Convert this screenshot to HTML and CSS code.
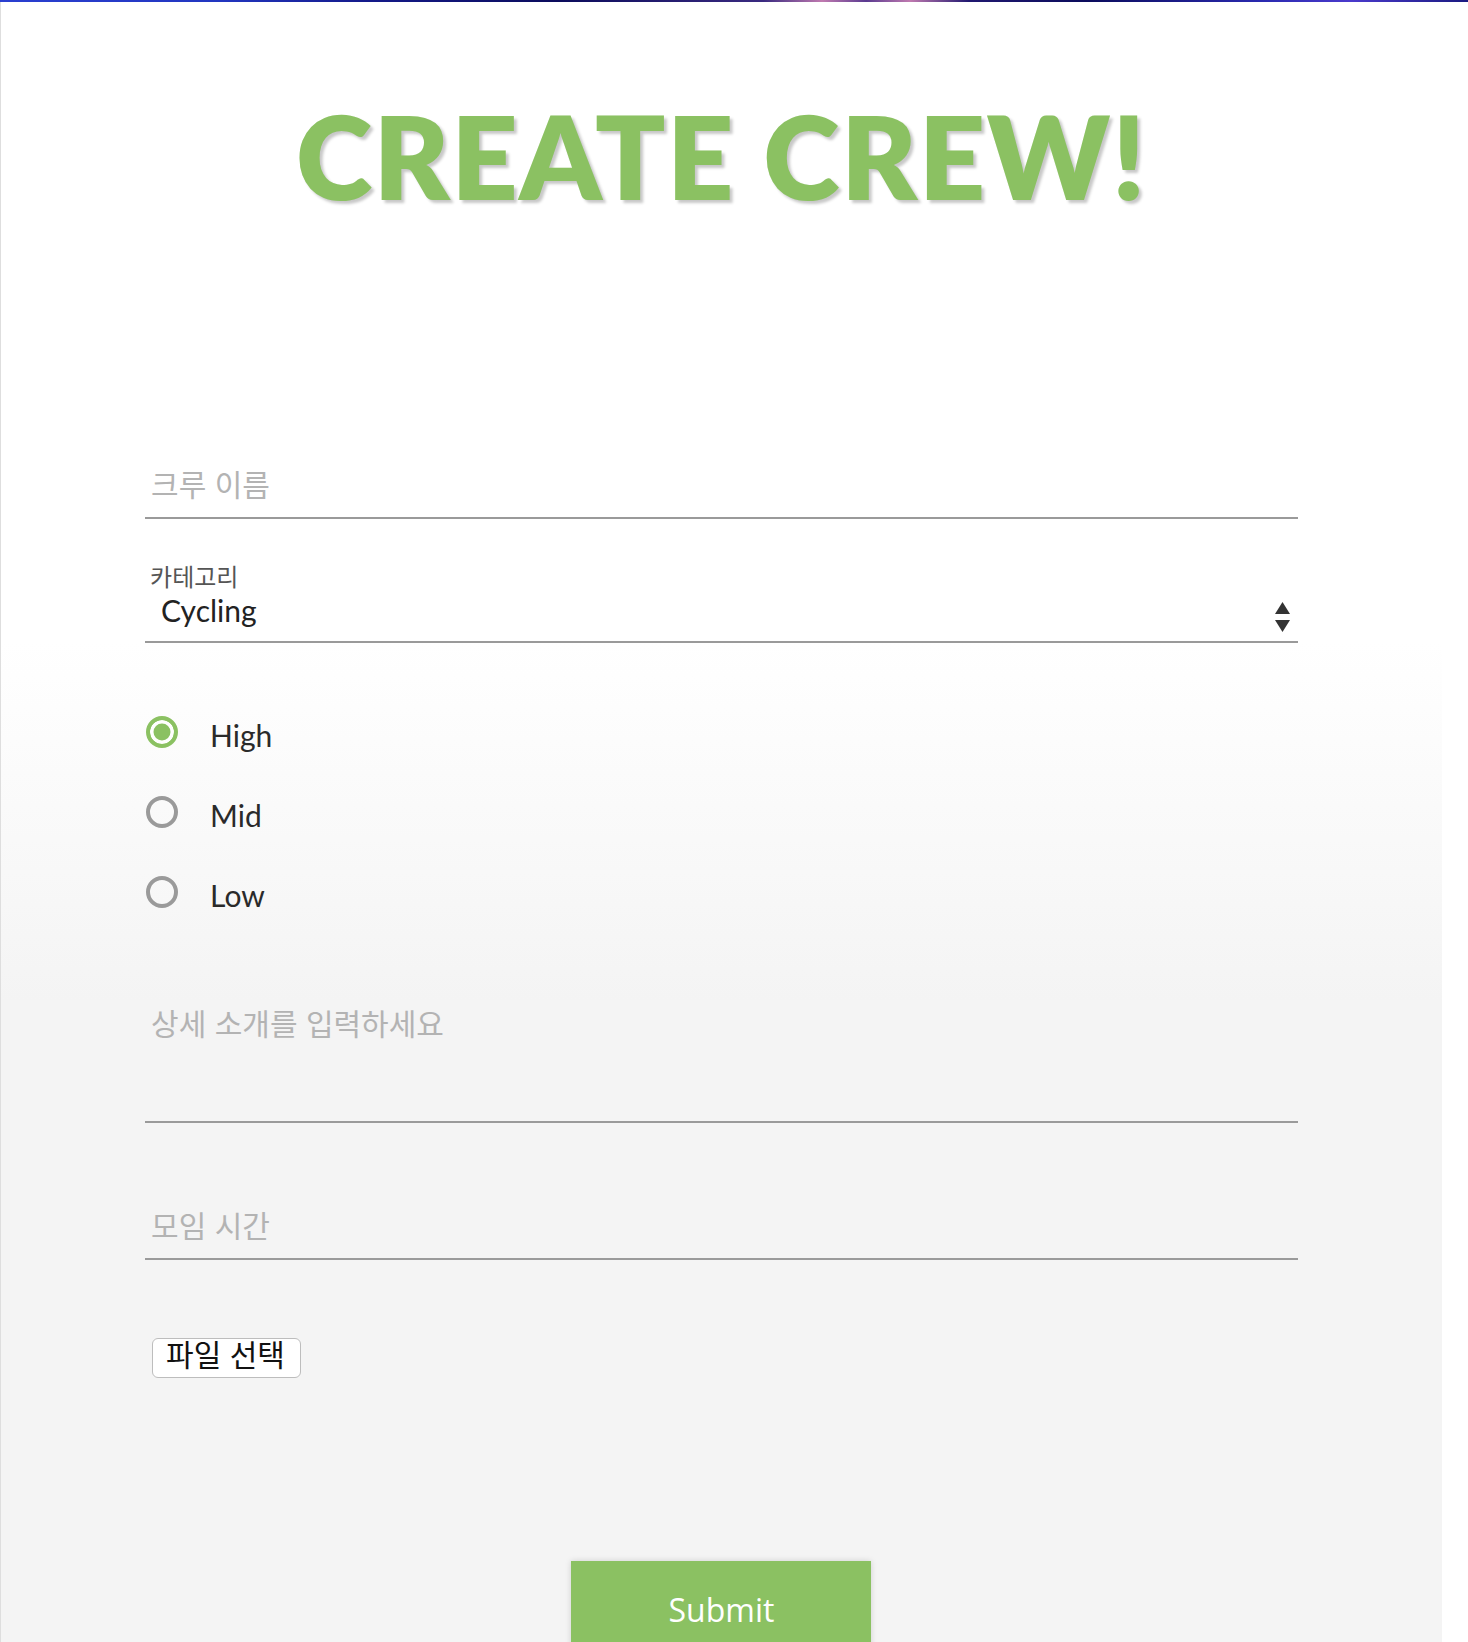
FILE: index.html
```html
<!DOCTYPE html>
<html lang="ko">
<head>
<meta charset="utf-8">
<title>Create Crew</title>
<link rel="stylesheet" href="styles.css">
</head>
<body>
<div class="topbar"></div>
<main class="page">
  <h1 class="title">CREATE CREW!</h1>
  <form class="crew-form">
    <input class="text-field" type="text" placeholder="크루 이름">

    <div class="select-field">
      <label class="select-label" for="category">카테고리</label>
      <div class="select-wrap">
        <select id="category" class="select">
          <option>Cycling</option>
          <option>Running</option>
          <option>Hiking</option>
        </select>
        <svg class="select-arrows" width="15" height="30" viewBox="0 0 15 30">
          <path d="M7.5 0 L15 12 L0 12 Z" fill="#333"/>
          <path d="M0 18 L15 18 L7.5 30 Z" fill="#333"/>
        </svg>
      </div>
    </div>

    <div class="radio-group">
      <label class="radio-row"><input class="radio" type="radio" name="level" checked><span class="radio-text">High</span></label>
      <label class="radio-row"><input class="radio" type="radio" name="level"><span class="radio-text">Mid</span></label>
      <label class="radio-row"><input class="radio" type="radio" name="level"><span class="radio-text">Low</span></label>
    </div>

    <textarea class="text-area" placeholder="상세 소개를 입력하세요"></textarea>

    <input class="text-field time-field" type="text" placeholder="모임 시간">

    <label class="file-btn">파일 선택<input class="file-input" type="file"></label>

    <div class="submit-row">
      <button class="submit" type="button">Submit</button>
    </div>
  </form>
</main>
</body>
</html>
```

FILE: styles.css
```css
html, body {
  margin: 0;
  padding: 0;
  background: #fff;
  overflow: hidden;
}

body {
  font-family: "Lato", "Noto Sans CJK KR", sans-serif;
}

.topbar {
  height: 2px;
  background: linear-gradient(to right,
    #2a3fd0 0%, #2236c0 15%, #141a8a 25%, #0b0c5c 38%,
    #3a2a80 52%, #c07ab0 56%, #5a3a90 59%, #c07ab0 62%, #201870 66%,
    #0b0c5c 74%, #2a2ab0 86%, #4a3acc 92%, #1a1a80 100%);
}

.page {
  width: 1442px;
  height: 1640px;
  box-sizing: border-box;
  border-left: 1px solid #dedede;
  overflow: hidden;
  background: linear-gradient(to bottom, #ffffff 0px, #ffffff 640px, #f4f4f4 1000px, #f4f4f4 100%);
}

.title {
  margin: 96px 0 0;
  font-family: "Lato", sans-serif;
  font-weight: 800;
  font-size: 116px;
  line-height: 116px;
  letter-spacing: 1.5px;
  text-align: center;
  color: #8bc162;
  text-shadow: 3px 3px 3px rgba(0, 0, 0, 0.22);
}

.crew-form {
  width: 80%;
  margin: 249px auto 0;
  display: flex;
  flex-direction: column;
}

.text-field {
  display: block;
  box-sizing: content-box;
  width: calc(100% - 6px);
  height: 40px;
  line-height: 40px;
  padding: 0 0 14px 6px;
  margin: 0;
  border: none;
  border-bottom: 2px solid #9a9a9a;
  background: transparent;
  font-family: "Noto Sans CJK KR", sans-serif;
  font-size: 30px;
  color: #333;
  outline: none;
}

.text-field::placeholder,
.text-area::placeholder {
  color: #b3b3b3;
}

.select-field {
  margin-top: 44px;
  display: flex;
  flex-direction: column;
}

.select-label {
  font-family: "Noto Sans CJK KR", sans-serif;
  font-size: 24px;
  line-height: 26px;
  color: #555;
  padding-left: 5px;
}

.select-wrap {
  position: relative;
  border-bottom: 2px solid #9a9a9a;
}

.select {
  display: block;
  width: 100%;
  height: 52px;
  margin: 0;
  padding: 0 0 10px 16px;
  border: none;
  background: transparent;
  -webkit-appearance: none;
  appearance: none;
  font-family: "Lato", sans-serif;
  font-size: 30px;
  color: #222;
  outline: none;
}

.select-arrows {
  position: absolute;
  right: 8px;
  top: 13px;
  pointer-events: none;
}

.radio-group {
  margin-top: 49px;
  display: flex;
  flex-direction: column;
}

.radio-row {
  height: 80px;
  display: flex;
  align-items: center;
  gap: 32px;
}

.radio {
  -webkit-appearance: none;
  appearance: none;
  box-sizing: border-box;
  width: 32px;
  height: 32px;
  margin: 0 0 0 1px;
  border: 4px solid #9a9a9a;
  border-radius: 50%;
  background: transparent;
  flex: none;
}

.radio:checked {
  border-color: #8bc162;
  background: #8bc162;
  box-shadow: inset 0 0 0 3.5px #fff;
}

.radio-text {
  font-family: "Lato", sans-serif;
  font-size: 30px;
  color: #2a2a2a;
  margin-top: 6px;
}

.text-area {
  display: block;
  box-sizing: border-box;
  width: 100%;
  height: 123px;
  margin: 68px 0 0;
  padding: 5px 6px 0;
  border: none;
  border-bottom: 2px solid #9a9a9a;
  background: transparent;
  resize: none;
  font-family: "Noto Sans CJK KR", sans-serif;
  font-size: 30px;
  line-height: 34px;
  color: #333;
  outline: none;
}

.time-field {
  margin-top: 81px;
}

.file-btn {
  align-self: flex-start;
  box-sizing: border-box;
  height: 40px;
  margin: 78px 0 0 7px;
  padding: 0 15px 0 13px;
  border: 1px solid #bdbdbd;
  border-radius: 6px;
  background: #fff;
  font-family: "Noto Sans CJK KR", sans-serif;
  font-size: 30px;
  line-height: 28px;
  color: #111;
  overflow: visible;
}

.file-input {
  display: none;
}

.submit-row {
  display: flex;
  justify-content: center;
  margin-top: 183px;
}

.submit {
  width: 300px;
  height: 96px;
  border: none;
  background: #8bc162;
  color: #fff;
  font-family: "Open Sans", sans-serif;
  font-size: 32px;
  box-shadow: 0 0 6px rgba(0, 0, 0, 0.15);
}
```
